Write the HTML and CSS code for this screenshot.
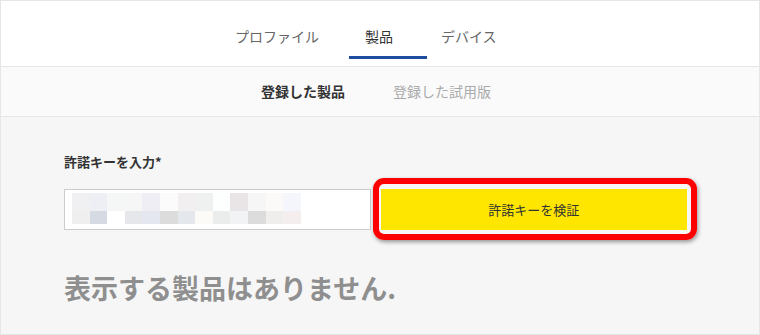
FILE: index.html
```html
<!DOCTYPE html>
<html lang="ja">
<head>
<meta charset="utf-8">
<title>製品</title>
<link rel="stylesheet" href="styles.css">
</head>
<body>
<div class="frame">
  <nav class="topnav">
    <a class="tab tab-first">プロファイル</a>
    <a class="tab tab-active">製品</a>
    <a class="tab tab-last">デバイス</a>
  </nav>
  <nav class="subnav">
    <a class="subtab subtab-active">登録した製品</a>
    <a class="subtab">登録した試用版</a>
  </nav>
  <main class="main">
    <label class="field-label">許諾キーを入力*</label>
    <div class="form-row">
      <div class="key-input">
        <div class="mosaic">
          <span></span><span></span><span></span><span></span><span></span><span></span><span></span><span></span><span></span><span></span><span></span><span></span><span></span>
          <span></span><span></span><span></span><span></span><span></span><span></span><span></span><span></span><span></span><span></span><span></span><span></span><span></span>
        </div>
      </div>
      <div class="btn-wrap">
        <button class="verify-btn">許諾キーを検証</button>
        <div class="highlight"></div>
      </div>
    </div>
    <p class="empty">表示する製品はありません.</p>
  </main>
</div>
</body>
</html>
```

FILE: styles.css
```css
* { box-sizing: border-box; }
html, body { margin: 0; padding: 0; background: #ffffff; }
body {
  font-family: "Noto Sans CJK JP", "Noto Sans", sans-serif;
  color: #333;
}
.frame {
  width: 760px;
  height: 335px;
  border: 1px solid #e6e6e6;
  background: #f6f6f6;
  display: flex;
  flex-direction: column;
  overflow: hidden;
}
.topnav {
  height: 66px;
  background: #ffffff;
  border-bottom: 1px solid #e6e6e6;
  display: flex;
  align-items: flex-end;
  padding-left: 218px;
}
.tab {
  font-size: 14px;
  line-height: 20px;
  color: #666;
  padding: 0 16px 10px 16px;
  margin-bottom: 7px;
  border-bottom: 3px solid transparent;
  white-space: nowrap;
}
.tab-first { margin-right: 14px; }
.tab-active {
  color: #333;
  width: 78px;
  border-bottom-color: #1f4ea0;
}
.tab-last { padding-left: 14px; }
.subnav {
  height: 50px;
  background: #fafafa;
  border-bottom: 1px solid #e6e6e6;
  display: flex;
  padding-left: 260px;
  padding-top: 14px;
}
.subtab {
  font-size: 14px;
  line-height: 20px;
  color: #aaa;
  margin-right: 48px;
  white-space: nowrap;
}
.subtab-active {
  color: #333;
  font-weight: bold;
}
.main {
  flex: 1;
  padding: 36px 0 0 63px;
}
.field-label {
  display: block;
  font-size: 13px;
  line-height: 18px;
  font-weight: bold;
  color: #333;
}
.form-row {
  margin-top: 18px;
  width: 623px;
  display: grid;
  grid-template-columns: 1fr 1fr;
  column-gap: 10px;
}
.key-input {
  height: 41px;
  background: #ffffff;
  border: 1px solid #cccccc;
  padding: 3px 0 0 7px;
}
.mosaic {
  display: grid;
  grid-template-columns: repeat(13, 17.6px);
  grid-template-rows: 18px 13px;
}
.mosaic span:nth-child(1) { background: #f0f0f2; }
.mosaic span:nth-child(2) { background: #eeeef5; }
.mosaic span:nth-child(3) { background: #f5f6f6; }
.mosaic span:nth-child(4) { background: #f6f6f7; }
.mosaic span:nth-child(5) { background: #f0eef5; }
.mosaic span:nth-child(6) { background: #fbfbfb; }
.mosaic span:nth-child(7) { background: #f2eff0; }
.mosaic span:nth-child(8) { background: #eff1f0; }
.mosaic span:nth-child(9) { background: #fdfefe; }
.mosaic span:nth-child(10) { background: #e9e4e6; }
.mosaic span:nth-child(11) { background: #f6f6f6; }
.mosaic span:nth-child(12) { background: #fbfaf9; }
.mosaic span:nth-child(13) { background: #f4f6fb; }
.mosaic span:nth-child(14) { background: #efefef; }
.mosaic span:nth-child(15) { background: #d6dbe3; }
.mosaic span:nth-child(16) { background: #ffffff; }
.mosaic span:nth-child(17) { background: #e5e7eb; }
.mosaic span:nth-child(18) { background: #e4e7ef; }
.mosaic span:nth-child(19) { background: #dcdcdc; }
.mosaic span:nth-child(20) { background: #e4e7eb; }
.mosaic span:nth-child(21) { background: #fcfbf8; }
.mosaic span:nth-child(22) { background: #ebecec; }
.mosaic span:nth-child(23) { background: #f1f3f4; }
.mosaic span:nth-child(24) { background: #dcdcdc; }
.mosaic span:nth-child(25) { background: #f0eeed; }
.mosaic span:nth-child(26) { background: #f4eeee; }
.btn-wrap {
  position: relative;
}
.verify-btn {
  display: block;
  width: 100%;
  height: 41px;
  border: none;
  background: #ffe600;
  color: #333;
  font-family: "Noto Sans CJK JP", "Noto Sans", sans-serif;
  font-size: 13px;
  padding: 0;
}
.highlight {
  position: absolute;
  top: -11px;
  left: -8px;
  right: -10px;
  bottom: -10px;
  border: 6px solid #ff0000;
  border-radius: 11px;
  box-shadow: 1px 2px 4px rgba(0, 0, 0, 0.4);
  pointer-events: none;
}
.empty {
  margin: 40px 0 0 0;
  font-size: 27px;
  line-height: 36px;
  font-weight: bold;
  color: #8f8f8f;
  white-space: nowrap;
}
```
